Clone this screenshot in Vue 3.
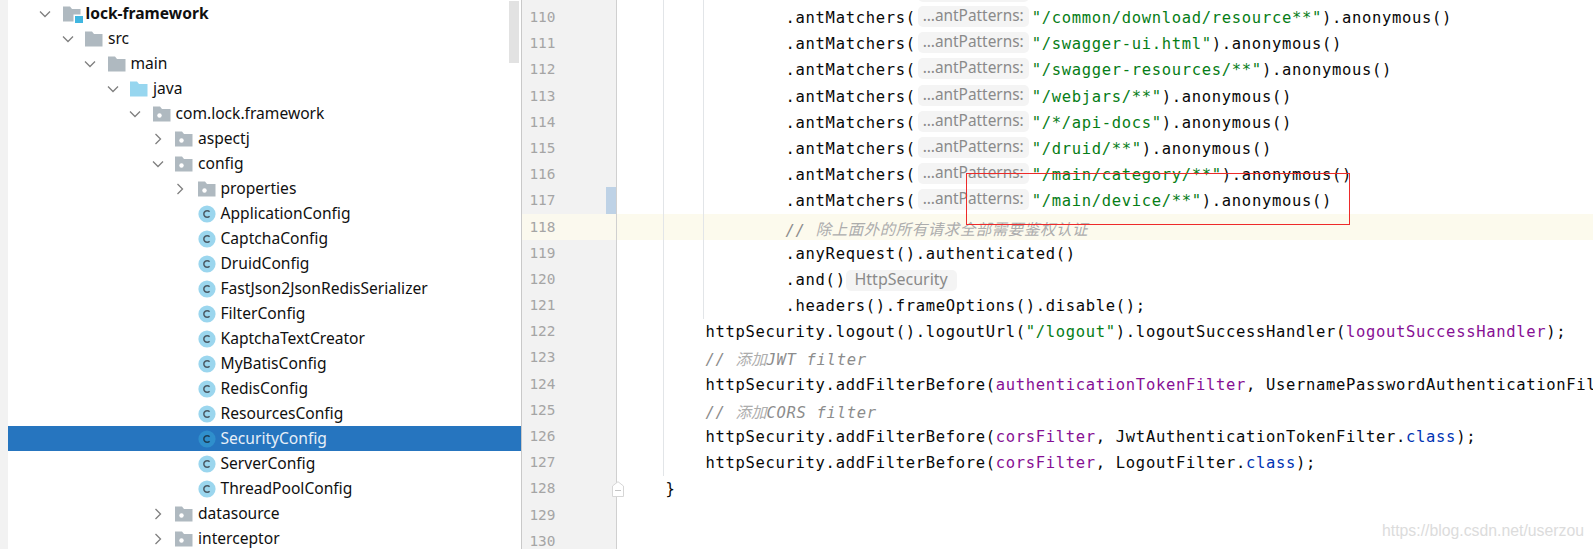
<script setup>
const tree = [
  { l: 0, name: 'lock-framework', kind: 'module', chev: 'down' },
  { l: 1, name: 'src', kind: 'folder', chev: 'down' },
  { l: 2, name: 'main', kind: 'folder', chev: 'down' },
  { l: 3, name: 'java', kind: 'source', chev: 'down' },
  { l: 4, name: 'com.lock.framework', kind: 'package', chev: 'down' },
  { l: 5, name: 'aspectj', kind: 'package', chev: 'right' },
  { l: 5, name: 'config', kind: 'package', chev: 'down' },
  { l: 6, name: 'properties', kind: 'package', chev: 'right' },
  { l: 6, name: 'ApplicationConfig', kind: 'class' },
  { l: 6, name: 'CaptchaConfig', kind: 'class' },
  { l: 6, name: 'DruidConfig', kind: 'class' },
  { l: 6, name: 'FastJson2JsonRedisSerializer', kind: 'class' },
  { l: 6, name: 'FilterConfig', kind: 'class' },
  { l: 6, name: 'KaptchaTextCreator', kind: 'class' },
  { l: 6, name: 'MyBatisConfig', kind: 'class' },
  { l: 6, name: 'RedisConfig', kind: 'class' },
  { l: 6, name: 'ResourcesConfig', kind: 'class' },
  { l: 6, name: 'SecurityConfig', kind: 'class', selected: true },
  { l: 6, name: 'ServerConfig', kind: 'class' },
  { l: 6, name: 'ThreadPoolConfig', kind: 'class' },
  { l: 5, name: 'datasource', kind: 'package', chev: 'right' },
  { l: 5, name: 'interceptor', kind: 'package', chev: 'right' }
]

const I12 = '            '
const I4 = '    '
const ant = (path) => [
  { t: I12 + '.antMatchers(' },
  { hint: '…antPatterns:' },
  { t: '"' + path + '"', c: 'str' },
  { t: ').anonymous()' }
]

const lines = [
  { n: 110, parts: ant('/common/download/resource**') },
  { n: 111, parts: ant('/swagger-ui.html') },
  { n: 112, parts: ant('/swagger-resources/**') },
  { n: 113, parts: ant('/webjars/**') },
  { n: 114, parts: ant('/*/api-docs') },
  { n: 115, parts: ant('/druid/**') },
  { n: 116, parts: ant('/main/category/**') },
  { n: 117, parts: ant('/main/device/**'), changed: true },
  { n: 118, current: true, parts: [{ t: I12 + '// ', c: 'com' }, { cjk: '除上面外的所有请求全部需要鉴权认证', c: 'wide' }] },
  { n: 119, parts: [{ t: I12 + '.anyRequest().authenticated()' }] },
  { n: 120, parts: [{ t: I12 + '.and()' }, { hint: 'HttpSecurity', c: 'type' }] },
  { n: 121, parts: [{ t: I12 + '.headers().frameOptions().disable();' }] },
  { n: 122, parts: [
    { t: I4 + 'httpSecurity.logout().logoutUrl(' },
    { t: '"/logout"', c: 'str' },
    { t: ').logoutSuccessHandler(' },
    { t: 'logoutSuccessHandler', c: 'fld' },
    { t: ');' }
  ] },
  { n: 123, parts: [{ t: I4 + '// ', c: 'com' }, { cjk: '添加' }, { t: 'JWT filter', c: 'com' }] },
  { n: 124, parts: [
    { t: I4 + 'httpSecurity.addFilterBefore(' },
    { t: 'authenticationTokenFilter', c: 'fld' },
    { t: ', UsernamePasswordAuthenticationFilter.' },
    { t: 'class', c: 'kw' },
    { t: ');' }
  ] },
  { n: 125, parts: [{ t: I4 + '// ', c: 'com' }, { cjk: '添加' }, { t: 'CORS filter', c: 'com' }] },
  { n: 126, parts: [
    { t: I4 + 'httpSecurity.addFilterBefore(' },
    { t: 'corsFilter', c: 'fld' },
    { t: ', JwtAuthenticationTokenFilter.' },
    { t: 'class', c: 'kw' },
    { t: ');' }
  ] },
  { n: 127, parts: [
    { t: I4 + 'httpSecurity.addFilterBefore(' },
    { t: 'corsFilter', c: 'fld' },
    { t: ', LogoutFilter.' },
    { t: 'class', c: 'kw' },
    { t: ');' }
  ] },
  { n: 128, parts: [{ t: '}' }] },
  { n: 129, parts: [] },
  { n: 130, parts: [] }
]
</script>

<template>
  <div class="ide">
    <aside class="tree">
      <div
        v-for="row in tree"
        :key="row.name"
        class="node"
        :class="{ selected: row.selected }"
        :style="{ paddingLeft: 29 + row.l * 22.5 + 'px' }"
      >
        <span class="chev">
          <svg v-if="row.chev === 'down'" width="12" height="8" viewBox="0 0 12 8"><path d="M1 1.5 L6 6.5 L11 1.5" /></svg>
          <svg v-else-if="row.chev === 'right'" width="8" height="12" viewBox="0 0 8 12"><path d="M1.5 1 L6.5 6 L1.5 11" /></svg>
        </span>
        <svg class="icon" width="20" height="18" viewBox="0 0 20 18">
          <template v-if="row.kind === 'class'">
            <circle cx="9" cy="9" r="8.6" class="circle" />
            <path d="M11.6 6.8 A3.3 3.3 0 1 0 11.6 11.2" class="cee" />
          </template>
          <template v-else>
            <path
              d="M0 1.5 H7 L9 4 H17.5 V16.5 H0 Z"
              :fill="row.kind === 'source' ? '#97d6ef' : '#afb9c0'"
            />
            <circle v-if="row.kind === 'package'" cx="6.5" cy="10.5" r="2.2" fill="#fff" />
            <template v-if="row.kind === 'module'">
              <rect x="10.5" y="9.5" width="9.5" height="8.5" fill="#fff" />
              <rect x="12" y="11" width="8" height="7" fill="#40b6e0" />
            </template>
          </template>
        </svg>
        <span class="label" :class="{ bold: row.kind === 'module' }">{{ row.name }}</span>
      </div>
      <div class="thumb"></div>
    </aside>

    <main class="editor">
      <div class="stub"><div class="num"></div><div class="code"><span class="hint"></span></div></div>
      <div class="lines">
        <div v-for="line in lines" :key="line.n" class="line" :class="{ current: line.current }">
          <div class="num" :class="{ changed: line.changed }">{{ line.n }}</div>
          <div class="code">
            <template v-for="(p, i) in line.parts" :key="i">
              <span v-if="p.hint" class="hint" :class="p.c">{{ p.hint }}</span>
              <span v-else-if="p.cjk" class="cjk" :class="p.c">{{ p.cjk }}</span>
              <span v-else :class="p.c">{{ p.t }}</span>
            </template>
          </div>
        </div>
      </div>
      <div class="guide outer"></div>
      <div class="guide inner"></div>
      <svg class="fold" width="12" height="16" viewBox="0 0 12 16">
        <path d="M0.5 5 L6 0.7 L11.5 5 V15.5 H0.5 Z" fill="#fff" stroke="#d6d6d6" />
        <path d="M3 9.5 H9" stroke="#c4c4c4" fill="none" />
      </svg>
    </main>

    <div class="redbox"></div>
    <div class="mark">https://blog.csdn.net/userzou</div>
  </div>
</template>

<style>
html, body { margin: 0; overflow: hidden; background: #fff; }
</style>

<style scoped>
.ide {
  position: relative;
  display: flex;
  width: 1593px;
  height: 549px;
  overflow: hidden;
  background: #fff;
}
.tree {
  position: relative;
  box-sizing: border-box;
  flex: 0 0 521px;
  padding: 1px 0 0 8px;
  background: #fff;
  overflow: hidden;
  box-shadow: inset 8px 0 0 #f2f2f2;
}
.node {
  display: flex;
  align-items: center;
  height: 25px;
  font: 15.6px/25px "Noto Sans", sans-serif;
  color: #101010;
  white-space: nowrap;
}
.selected { background: #2675bf; color: #e8eff8; }
.chev {
  flex: 0 0 16px;
  display: flex;
  align-items: center;
  justify-content: center;
}
.chev path { fill: none; stroke: #7f7f7f; stroke-width: 1.3; }
.icon { flex: 0 0 20px; margin-left: 9.7px; }
.circle { fill: #9bd6ee; }
.cee { fill: none; stroke: #4a5a64; stroke-width: 1.5; }
.selected .circle { fill: #2f8fcc; }
.selected .cee { stroke: #1d3f56; }
.label { margin-left: 2.8px; }
.bold { font-weight: 700; }
.thumb {
  position: absolute;
  right: 1px;
  top: 0;
  box-sizing: content-box;
  width: 11px;
  height: 63px;
  background: #e2e2e2;
  border: solid #e4e4e4;
  border-width: 0 1px 1px 0;
  outline: 1px solid #fff;
  outline-offset: -1px;
}
.editor {
  position: relative;
  flex: 1;
  min-width: 0;
  overflow: hidden;
  border-left: 1px solid #c9c9c9;
}
.stub { display: flex; height: 4px; }
.stub .code { overflow: hidden; position: relative; }
.stub .hint { position: absolute; left: 299px; top: -19.2px; }
.line { display: flex; height: 26.2px; }
.num {
  position: relative;
  box-sizing: border-box;
  flex: 0 0 95px;
  padding-left: 7.5px;
  background: #f2f2f2;
  border-right: 1px solid #d0d0d0;
  font: 14.4px/26.2px "DejaVu Sans Mono", monospace;
  letter-spacing: -0.05px;
  color: #a5a5a5;
}
.changed::after {
  content: "";
  position: absolute;
  right: 0;
  top: 0;
  width: 10px;
  height: 28px;
  background: #bed2e6;
}
.current { background: #fcfaed; }
.current .num { background: #fbf9ee; }
.code {
  flex: 1;
  box-sizing: border-box;
  padding: 1px 0 0 48.5px;
  white-space: pre;
  font: 15.5px/26.2px "DejaVu Sans Mono", monospace;
  letter-spacing: 0.676px;
  color: #080808;
}
.str { color: #067d17; }
.fld { color: #871094; }
.kw { color: #0033b3; }
.com { color: #8c8c8c; font-style: italic; }
.cjk {
  font: italic 15.5px/26.2px "Noto Sans CJK SC", sans-serif;
  letter-spacing: 0;
  color: #adadad;
}
.wide { letter-spacing: 0.52px; vertical-align: 1px; }
.hint {
  display: inline-block;
  box-sizing: border-box;
  width: 111px;
  height: 21px;
  margin: 0 3px 0 2px;
  vertical-align: 2px;
  border-radius: 5px;
  background: #f4f4f4;
  text-align: center;
  font: 15.4px/19px "Noto Sans", sans-serif;
  letter-spacing: 0;
  color: #8a8a8a;
}
.type {
  width: 111px;
  margin-left: 0;
  vertical-align: 0;
  font-size: 16px;
}
.guide { position: absolute; top: 0; width: 1px; background: #e2e5e8; }
.outer { left: 141px; height: 476px; }
.inner { left: 181px; height: 319px; }
.fold { position: absolute; left: 89.5px; top: 481px; }
.redbox {
  position: absolute;
  left: 966px;
  top: 173px;
  width: 382px;
  height: 50px;
  border: 1.5px solid #ee2a2a;
}
.mark {
  position: absolute;
  left: 1382px;
  top: 521px;
  font: 15.8px/20px "Liberation Sans", sans-serif;
  color: #dcdcdc;
}
</style>
